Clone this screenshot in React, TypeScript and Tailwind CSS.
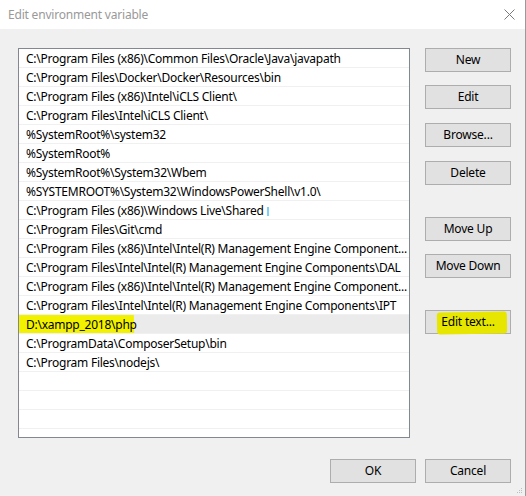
import React from "react";

// Windows 10 "Edit environment variable" dialog

const PATHS = [
  "C:\\Program Files (x86)\\Common Files\\Oracle\\Java\\javapath",
  "C:\\Program Files\\Docker\\Docker\\Resources\\bin",
  "C:\\Program Files (x86)\\Intel\\iCLS Client\\",
  "C:\\Program Files\\Intel\\iCLS Client\\",
  "%SystemRoot%\\system32",
  "%SystemRoot%",
  "%SystemRoot%\\System32\\Wbem",
  "%SYSTEMROOT%\\System32\\WindowsPowerShell\\v1.0\\",
  "C:\\Program Files (x86)\\Windows Live\\Shared",
  "C:\\Program Files\\Git\\cmd",
  "C:\\Program Files (x86)\\Intel\\Intel(R) Management Engine Component...",
  "C:\\Program Files\\Intel\\Intel(R) Management Engine Components\\DAL",
  "C:\\Program Files (x86)\\Intel\\Intel(R) Management Engine Component...",
  "C:\\Program Files\\Intel\\Intel(R) Management Engine Components\\IPT",
  "D:\\xampp_2018\\php",
  "C:\\ProgramData\\ComposerSetup\\bin",
  "C:\\Program Files\\nodejs\\",
  "",
  "",
  "",
  "",
];

const SELECTED = 14;

function Btn({ label, className = "", marker = false }: { label: string; className?: string; marker?: boolean }) {
  return (
    <button className={`relative w-[86px] h-[24px] shrink-0 bg-[#e1e1e1] border border-[#adadad] text-[12px] text-black tracking-[-0.2px] ${className}`}>
      {marker && (
        <span className="absolute left-[11px] top-[1px] w-[70px] h-[22px] rounded-[3px] bg-[#e6e600] -rotate-1" />
      )}
      <span className="relative">{label}</span>
    </button>
  );
}

export default function App() {
  return (
    <div
      className="relative w-[526px] h-[496px] bg-[#f0f0f0] border-r border-[#9a9a9a] flex flex-col overflow-hidden"
      style={{ fontFamily: '"Noto Sans", "Open Sans", sans-serif' }}
    >
      <div className="h-[29px] shrink-0 bg-white flex items-center justify-between pl-2 pr-[10px]">
        <span className="text-[12px] text-[#999999] tracking-[-0.2px]">Edit environment variable</span>
        <svg width="11" height="11" viewBox="0 0 11 11" className="text-[#7a7a7a]">
          <path d="M0.5 0.5 L10.5 10.5 M10.5 0.5 L0.5 10.5" stroke="currentColor" strokeWidth="1" fill="none" />
        </svg>
      </div>

      <div className="flex pt-[19px] pl-[18px]">
        <div className="w-[392px] h-[390px] shrink-0 border border-[#828790] bg-white overflow-hidden">
          {PATHS.map((p, i) => (
            <div
              key={i}
              className={`relative h-[19px] border-b border-[#f0f0f0] pl-[7px] pt-[2px] flex items-center whitespace-nowrap overflow-hidden text-[12px] tracking-[-0.25px] text-black ${
                i === SELECTED ? "bg-[#ebebeb]" : ""
              }`}
            >
              {i === SELECTED && (
                <span className="absolute left-0 top-[-5px] w-[115px] h-[27px] rounded-[4px] bg-[#f2f200] -rotate-1" />
              )}
              <span className="relative">{p}</span>
              {i === 8 && <span className="relative ml-[3px] w-[2px] h-[9px] bg-[#7fd0f5]" />}
            </div>
          ))}
        </div>

        <div className="ml-[15px] flex flex-col">
          <Btn label="New" />
          <Btn label="Edit" className="mt-[13px]" />
          <Btn label="Browse..." className="mt-[14px]" />
          <Btn label="Delete" className="mt-[14px]" />
          <Btn label="Move Up" className="mt-[32px]" />
          <Btn label="Move Down" className="mt-[13px]" />
          <Btn label="Edit text..." className="mt-[32px]" marker />
        </div>
      </div>

      <div className="flex justify-end gap-[9px] pr-[14px] mt-[21px]">
        <Btn label="OK" />
        <Btn label="Cancel" />
      </div>

      <svg width="6" height="6" viewBox="0 0 6 6" className="absolute right-[2px] bottom-[2px]">
        <g fill="#bdbdbd">
          <rect x="4" y="0" width="1" height="1" />
          <rect x="2" y="2" width="1" height="1" />
          <rect x="4" y="2" width="1" height="1" />
          <rect x="0" y="4" width="1" height="1" />
          <rect x="2" y="4" width="1" height="1" />
          <rect x="4" y="4" width="1" height="1" />
        </g>
      </svg>
    </div>
  );
}
